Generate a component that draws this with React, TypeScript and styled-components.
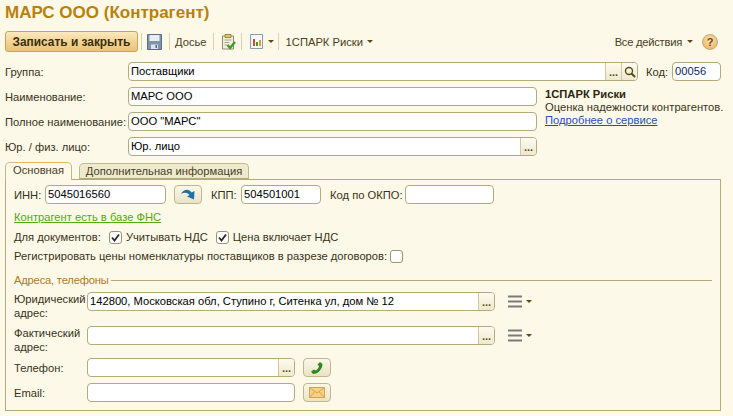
import React from "react";
import styled, { createGlobalStyle } from "styled-components";

const Global = createGlobalStyle`
  html, body { margin: 0; padding: 0; background: #fcf9e9; }
  body { width: 733px; height: 416px; overflow: hidden; font-family: "Liberation Sans", Arial, sans-serif; font-size: 11.2px; color: #3a3216; }
  * { box-sizing: border-box; }
`;

const Page = styled.div`
  width: 733px;
  height: 416px;
  padding: 3px 12px 0 5px;
  display: flex;
  flex-direction: column;
`;
const Title = styled.h1`
  margin: 0;
  height: 20px;
  font-size: 17px;
  line-height: 20px;
  font-weight: 700;
  color: #b8810c;
`;
const Toolbar = styled.div`
  margin-top: 8px;
  height: 21px;
  padding-right: 3px;
  display: flex;
  align-items: center;
`;
const SaveButton = styled.button`
  flex: none;
  width: 133px;
  height: 21px;
  padding: 0;
  border: 1px solid #c5a45e;
  border-radius: 3px;
  background: linear-gradient(#fbe9bf, #f3d28f 55%, #ecc377);
  font: 700 11.9px "Liberation Sans", Arial, sans-serif;
  color: #3a2e10;
`;
const Sep = styled.span<{ $l: number }>`
  flex: none;
  width: 1px;
  height: 17px;
  background: #d8d2b0;
  margin-left: ${(p) => p.$l}px;
`;
const ToolText = styled.span<{ $l?: number; $tight?: number }>`
  color: #4a4020;
  white-space: nowrap;
  margin-left: ${(p) => p.$l ?? 0}px;
  letter-spacing: ${(p) => p.$tight ?? 0}px;
`;
const ToolIcon = styled.span<{ $l: number }>`
  flex: none;
  display: flex;
  margin-left: ${(p) => p.$l}px;
`;
const Caret = styled.span<{ $l: number }>`
  flex: none;
  width: 0;
  height: 0;
  margin-left: ${(p) => p.$l}px;
  border-left: 3px solid transparent;
  border-right: 3px solid transparent;
  border-top: 3px solid #5a4a18;
`;
const Spacer = styled.div`
  flex: 1;
`;
const HelpCircle = styled.span`
  flex: none;
  width: 16px;
  height: 16px;
  margin-left: 9px;
  border: 1px solid #c8a878;
  border-radius: 50%;
  background: radial-gradient(circle at 50% 35%, #fbe3b8, #eda850);
  color: #6b4a1c;
  font-weight: 700;
  font-size: 11px;
  line-height: 14px;
  text-align: center;
`;
const GroupRow = styled.div`
  margin-top: 10px;
  display: flex;
  align-items: center;
`;
const Label = styled.span<{ $w?: number }>`
  flex: none;
  width: ${(p) => (p.$w ? `${p.$w}px` : "auto")};
  white-space: nowrap;
  color: #3a3216;
`;
const Field = styled.div<{ $w?: number; $grow?: boolean }>`
  flex: ${(p) => (p.$grow ? "1" : "none")};
  width: ${(p) => (p.$w ? `${p.$w}px` : "auto")};
  height: 19px;
  display: flex;
  background: #fff;
  border: 1px solid #b4ab7d;
  border-radius: 4px;
  overflow: hidden;
`;
const Value = styled.span<{ $blue?: boolean }>`
  flex: 1;
  padding-left: 2px;
  line-height: 17px;
  white-space: nowrap;
  overflow: hidden;
  color: ${(p) => (p.$blue ? "#0e2a5c" : "#000")};
`;
const PickButton = styled.span`
  flex: none;
  width: 16px;
  border-left: 1px solid #cfc8a4;
  background: linear-gradient(#fdfbf0, #eee8cc);
  color: #5a4a18;
  display: flex;
  align-items: center;
  justify-content: center;
`;
const DotsText = styled.span`
  font-weight: 700;
  font-size: 11px;
  line-height: 11px;
  margin-top: 1px;
`;
const CodeLabel = styled(Label)`
  width: 22px;
  margin: 0 4px 0 8px;
`;
const MiddleBlock = styled.div`
  display: flex;
  margin-top: 6px;
`;
const FormColumn = styled.div`
  flex: none;
  width: 532px;
  display: flex;
  flex-direction: column;
  gap: 6px;
`;
const FormRow = styled.div`
  display: flex;
  align-items: center;
`;
const Info = styled.div`
  margin: 1px 0 0 8px;
  display: flex;
  flex-direction: column;
  line-height: 13px;
  white-space: nowrap;
`;
const InfoTitle = styled.b`
  color: #2c2610;
`;
const Link = styled.a<{ $color: string }>`
  color: ${(p) => p.$color};
  text-decoration: underline;
`;
const Tabs = styled.div`
  margin-top: 6px;
  height: 17px;
  display: flex;
  align-items: flex-end;
  gap: 7px;
  position: relative;
  z-index: 1;
`;
const Tab = styled.div<{ $active?: boolean; $w: number }>`
  width: ${(p) => p.$w}px;
  height: ${(p) => (p.$active ? "18px" : "16px")};
  margin-bottom: ${(p) => (p.$active ? "-1px" : "0")};
  border: 1px solid #c0b88c;
  border-bottom: ${(p) => (p.$active ? "none" : "1px solid #b4ab7d")};
  border-top: 1px solid ${(p) => (p.$active ? "#e8b860" : "#c0b88c")};
  border-radius: 5px 5px 0 0;
  background: ${(p) => (p.$active ? "#fcf9e9" : "#eeeacf")};
  line-height: 15px;
  text-align: center;
  color: #4a4020;
`;
const Panel = styled.div`
  height: 232px;
  border: 1px solid #b4ab7d;
  padding: 5px 8px 0;
  display: flex;
  flex-direction: column;
`;
const InnRow = styled.div`
  display: flex;
  align-items: center;
  height: 19px;
`;
const OkpoLabel = styled(Label)`
  width: 75px;
  margin-left: 9px;
`;
const SquareButton = styled.button<{ $ml?: number; $mr?: number }>`
  flex: none;
  width: 28px;
  height: 19px;
  padding: 0;
  margin: 0 ${(p) => p.$mr ?? 0}px 0 ${(p) => p.$ml ?? 0}px;
  border: 1px solid #c0b88c;
  border-radius: 4px;
  background: linear-gradient(#fbf8e8, #e9e3c6);
  display: flex;
  align-items: center;
  justify-content: center;
`;
const LinkRow = styled.div`
  margin-top: 6px;
  height: 14px;
  line-height: 14px;
`;
const CheckRow = styled.div<{ $mt: number }>`
  margin-top: ${(p) => p.$mt}px;
  height: 14px;
  display: flex;
  align-items: center;
  white-space: nowrap;
`;
const Check = styled.span<{ $ml?: number; $mr?: number }>`
  flex: none;
  width: 13px;
  height: 13px;
  margin: 0 ${(p) => p.$mr ?? 0}px 0 ${(p) => p.$ml ?? 0}px;
  border: 1px solid #9c9570;
  border-radius: 3px;
  background: #fff;
  display: flex;
  align-items: center;
  justify-content: center;
`;
const GroupTitle = styled.div`
  margin-top: 10px;
  width: 698px;
  height: 14px;
  display: flex;
  align-items: center;
  gap: 2px;
  letter-spacing: -0.2px;
  color: #b07a18;
  white-space: nowrap;
`;
const GroupLine = styled.span`
  flex: 1;
  height: 1px;
  background: #b4ab7d;
`;
const AddressRow = styled.div<{ $mt: number }>`
  margin-top: ${(p) => p.$mt}px;
  height: 28px;
  display: flex;
  align-items: flex-start;
`;
const AddressLabel = styled.span`
  flex: none;
  width: 73px;
  margin-top: 1px;
  line-height: 13.5px;
  color: #3a3216;
`;
const MenuIcon = styled.span`
  margin: 2px 0 0 12px;
  display: flex;
  align-items: center;
  height: 15px;
`;
const ContactRow = styled.div<{ $mt: number }>`
  margin-top: ${(p) => p.$mt}px;
  display: flex;
  align-items: center;
`;

const Dots = () => (
  <PickButton>
    <DotsText>...</DotsText>
  </PickButton>
);

const CheckMark = () => (
  <svg width="9" height="9" viewBox="0 0 9 9">
    <path d="M1 4.5 L3.5 7.5 L8 1.5" fill="none" stroke="#2a2a2a" strokeWidth="1.8" />
  </svg>
);

const Menu = () => (
  <MenuIcon>
    <svg width="16" height="13" viewBox="0 0 16 13">
      <path d="M1 1.5H15M1 6.5H15M1 11.5H15" stroke="#7a7a7a" strokeWidth="2" />
    </svg>
    <Caret $l={3} />
  </MenuIcon>
);

export default function App() {
  return (
    <>
      <Global />
      <Page>
        <Title>МАРС ООО (Контрагент)</Title>
        <Toolbar>
          <SaveButton>Записать и закрыть</SaveButton>
          <Sep $l={3} />
          <ToolIcon $l={5}>
            <svg width="15" height="16" viewBox="0 0 15 16">
              <path d="M.5.5h14v15H.5z" fill="#7f93ad" stroke="#5a6c86" />
              <path d="M2.5 1h10v6h-10z" fill="#e8edf2" />
              <path d="M4 10.5h7V15H4z" fill="#dfe4ea" />
              <path d="M8.5 11h1.5v3H8.5z" fill="#55667f" />
            </svg>
          </ToolIcon>
          <Sep $l={7} />
          <ToolText $l={5}>Досье</ToolText>
          <Sep $l={6} />
          <ToolIcon $l={7}>
            <svg width="15" height="17" viewBox="0 0 15 17">
              <path d="M1.5 3h11v13h-11z" fill="#f4efd8" stroke="#8d8a78" />
              <path d="M4 1.5h6V4.5H4z" fill="#e3c66f" stroke="#9a8440" />
              <path d="M3.5 7h7M3.5 9.5h5M3.5 12h3" stroke="#a9a692" />
              <path d="M6.5 12 L9 15 L14 9" fill="none" stroke="#3f9a2e" strokeWidth="2.4" />
            </svg>
          </ToolIcon>
          <Sep $l={5} />
          <ToolIcon $l={8}>
            <svg width="13" height="15" viewBox="0 0 13 15">
              <path d="M.5.5h12v14H.5z" fill="#f6f8fb" stroke="#8d9bb2" />
              <path d="M3 5h2v7H3z" fill="#d9492c" />
              <path d="M6 8h2v4H6z" fill="#3f9a2e" />
              <path d="M9 6h2v6H9z" fill="#d9a12c" />
            </svg>
          </ToolIcon>
          <Caret $l={5} />
          <Sep $l={4} />
          <ToolText $l={7}>1СПАРК Риски</ToolText>
          <Caret $l={4} />
          <Spacer />
          <ToolText $tight={-0.25}>Все действия</ToolText>
          <Caret $l={5} />
          <HelpCircle>?</HelpCircle>
        </Toolbar>

        <GroupRow>
          <Label $w={123}>Группа:</Label>
          <Field $grow>
            <Value>Поставщики</Value>
            <Dots />
            <PickButton>
              <svg width="12" height="12" viewBox="0 0 12 12">
                <circle cx="5" cy="5" r="3.5" fill="none" stroke="#5a4a18" strokeWidth="1.4" />
                <path d="M7.5 7.5L11 11" stroke="#5a4a18" strokeWidth="2" />
              </svg>
            </PickButton>
          </Field>
          <CodeLabel>Код:</CodeLabel>
          <Field $w={49}>
            <Value $blue>00056</Value>
          </Field>
        </GroupRow>

        <MiddleBlock>
          <FormColumn>
            <FormRow>
              <Label $w={123}>Наименование:</Label>
              <Field $grow><Value>МАРС ООО</Value></Field>
            </FormRow>
            <FormRow>
              <Label $w={123}>Полное наименование:</Label>
              <Field $grow><Value>ООО "МАРС"</Value></Field>
            </FormRow>
            <FormRow>
              <Label $w={123}>Юр. / физ. лицо:</Label>
              <Field $grow>
                <Value>Юр. лицо</Value>
                <Dots />
              </Field>
            </FormRow>
          </FormColumn>
          <Info>
            <InfoTitle>1СПАРК Риски</InfoTitle>
            <span>Оценка надежности контрагентов.</span>
            <Link $color="#1f4fbf" href="#">Подробнее о сервисе</Link>
          </Info>
        </MiddleBlock>

        <Tabs>
          <Tab $active $w={67}>Основная</Tab>
          <Tab $w={170}>Дополнительная информация</Tab>
        </Tabs>
        <Panel>
          <InnRow>
            <Label $w={31}>ИНН:</Label>
            <Field $w={121}><Value>5045016560</Value></Field>
            <SquareButton $ml={8} $mr={9}>
              <svg width="16" height="13" viewBox="0 0 16 13">
                <path d="M1 6 C3 1 9 0 11.5 4.5 L14.5 3 L14 11.5 L7 8.5 L9.5 7 C7.5 4.5 4 4 1 6z" fill="#1f6fa8" />
              </svg>
            </SquareButton>
            <Label $w={30}>КПП:</Label>
            <Field $w={80}><Value>504501001</Value></Field>
            <OkpoLabel>Код по ОКПО:</OkpoLabel>
            <Field $w={89}><Value /></Field>
          </InnRow>
          <LinkRow><Link $color="#55a80c" href="#">Контрагент есть в базе ФНС</Link></LinkRow>
          <CheckRow $mt={6}>
            Для документов:
            <Check $ml={8} $mr={4}><CheckMark /></Check>
            Учитывать НДС
            <Check $ml={8} $mr={4}><CheckMark /></Check>
            Цена включает НДС
          </CheckRow>
          <CheckRow $mt={5}>
            Регистрировать цены номенклатуры поставщиков в разрезе договоров:
            <Check $ml={3} />
          </CheckRow>
          <GroupTitle>Адреса, телефоны <GroupLine /></GroupTitle>
          <AddressRow $mt={5}>
            <AddressLabel>Юридический адрес:</AddressLabel>
            <Field $w={408}>
              <Value>142800, Московская обл, Ступино г, Ситенка ул, дом № 12</Value>
              <Dots />
            </Field>
            <Menu />
          </AddressRow>
          <AddressRow $mt={6}>
            <AddressLabel>Фактический адрес:</AddressLabel>
            <Field $w={408}>
              <Value />
              <Dots />
            </Field>
            <Menu />
          </AddressRow>
          <ContactRow $mt={4}>
            <Label $w={73}>Телефон:</Label>
            <Field $w={208}>
              <Value />
              <Dots />
            </Field>
            <SquareButton $ml={8}>
              <svg width="14" height="14" viewBox="0 0 14 14">
                <path d="M10 1 L12.5 3 C12.5 8 8 13 3 13 L1 10.5 L4 8.5 L5.5 9.5 C7.5 9 8.5 7 9 5 L7.5 3.5z" fill="#2f8a1e" />
              </svg>
            </SquareButton>
          </ContactRow>
          <ContactRow $mt={6}>
            <Label $w={73}>Email:</Label>
            <Field $w={208}><Value /></Field>
            <SquareButton $ml={8}>
              <svg width="16" height="11" viewBox="0 0 16 11">
                <path d="M.5.5h15v10H.5z" fill="#f5d28a" stroke="#d9a24a" />
                <path d="M.5.5L8 6l7.5-5.5M.5 10.5L6 4.5M15.5 10.5L10 4.5" fill="none" stroke="#d9a24a" />
              </svg>
            </SquareButton>
          </ContactRow>
        </Panel>
      </Page>
    </>
  );
}
